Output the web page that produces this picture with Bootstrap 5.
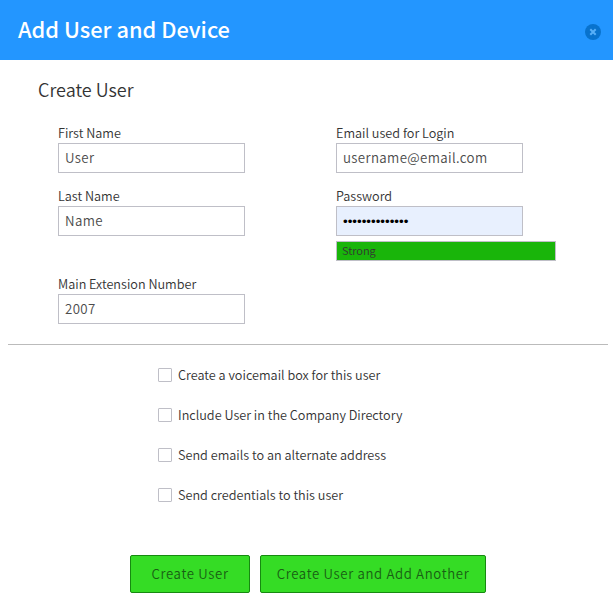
<!DOCTYPE html>
<html lang="en">
<head>
<meta charset="utf-8">
<meta name="viewport" content="width=device-width, initial-scale=1">
<title>Add User and Device</title>
<link rel="stylesheet" href="https://cdn.jsdelivr.net/npm/bootstrap@5.3.0/dist/css/bootstrap.min.css">
<style>
body{font-family:"Noto Sans CJK SC","Noto Sans",sans-serif;color:#333;background:#fff;font-size:12.67px;font-weight:350;line-height:20px;overflow:hidden}
.dialog-head{height:60px;background:#2396ff;padding:0 12px 0 18px}
.dialog-title{font-size:21.8px;line-height:57px;height:60px;font-weight:500;letter-spacing:0}
.section-title{font-size:18px;line-height:30px;height:45px;font-weight:350;padding:14px 0 0 38px}
.fields{padding:18px 0 0 58px}
.fields .first{width:278px}
.fields .form-label{height:20px;line-height:20px;margin:0;display:block;white-space:nowrap}
.fields .form-control{width:187px;height:30px;border:1px solid #bfbfc7;border-radius:0;padding:0 6px 1px;font-size:13.3px;font-weight:350;line-height:27px;letter-spacing:.35px;color:#4c4c4c}
.fields .form-control.secret{background:#e8f0fe;color:#000;font-family:"Liberation Sans",Arial,sans-serif;font-size:13.33px;letter-spacing:0;padding-bottom:0}
.gap-above{padding-top:13px}
.gap-above-wide{padding-top:38px}
.strength{width:220px;height:20px;margin-top:5px;background:#19b50a;border:1px solid #bfbfc7;padding-left:5px;font-size:11px;line-height:17px}
.divider{margin:20px 5px 0 8px;border:0;border-top:1px solid #bbb;opacity:1}
.options{padding:20px 0 0 158px}
.option{height:20px;margin-bottom:20px;gap:6px}
.option .form-check-input{width:14px;height:14px;margin:0;border:1px solid #bfbfc7;border-radius:1px}
.actions{padding:30px 0 0 130px;gap:10px}
.btn-create{height:38px;padding:0;background:#35dc25;border:1px solid #168a10;border-radius:2px;color:#195f14;font-size:13.2px;font-weight:350;line-height:36px;letter-spacing:.65px}
.btn-one{width:120px}
.btn-two{width:226px}
</style>
</head>
<body>
<header class="dialog-head d-flex align-items-center justify-content-between">
<h1 class="dialog-title text-white m-0">Add User and Device</h1>
<button type="button" class="border-0 bg-transparent p-0 d-flex mt-1" aria-label="Close"><svg width="16" height="16" viewBox="0 0 16 16"><circle cx="8" cy="8" r="8" fill="#0872cd"/><path d="M5.3 5.3l5.4 5.4M10.7 5.3l-5.4 5.4" stroke="#57aff8" stroke-width="2"/></svg></button>
</header>
<main>
<h2 class="section-title m-0">Create User</h2>
<form>
<div class="fields d-flex">
<div class="first">
<div><label class="form-label" for="fn">First Name</label><input id="fn" class="form-control" value="User"></div>
<div class="gap-above"><label class="form-label" for="ln">Last Name</label><input id="ln" class="form-control" value="Name"></div>
<div class="gap-above-wide"><label class="form-label" for="ext">Main Extension Number</label><input id="ext" class="form-control" value="2007"></div>
</div>
<div>
<div><label class="form-label" for="em">Email used for Login</label><input id="em" class="form-control" value="username@email.com"></div>
<div class="gap-above"><label class="form-label" for="pw">Password</label><input id="pw" type="password" class="form-control secret" value="abcdefghijklmn"></div>
<div class="strength">Strong</div>
</div>
</div>
<hr class="divider">
<div class="options">
<label class="option d-flex align-items-center"><input type="checkbox" class="form-check-input"><span>Create a voicemail box for this user</span></label>
<label class="option d-flex align-items-center"><input type="checkbox" class="form-check-input"><span>Include User in the Company Directory</span></label>
<label class="option d-flex align-items-center"><input type="checkbox" class="form-check-input"><span>Send emails to an alternate address</span></label>
<label class="option d-flex align-items-center"><input type="checkbox" class="form-check-input"><span>Send credentials to this user</span></label>
</div>
<div class="actions d-flex">
<button type="button" class="btn btn-create btn-one">Create User</button>
<button type="button" class="btn btn-create btn-two">Create User and Add Another</button>
</div>
</form>
</main>
<script src="https://cdn.jsdelivr.net/npm/bootstrap@5.3.0/dist/js/bootstrap.bundle.min.js"></script>
</body>
</html>
